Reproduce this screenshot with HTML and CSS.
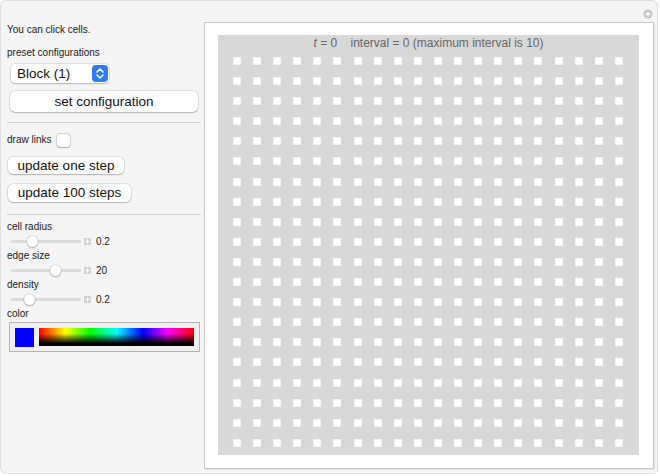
FILE: index.html
```html
<!DOCTYPE html>
<html>
<head>
<meta charset="utf-8">
<link rel="stylesheet" href="styles.css">
</head>
<body>
<div class="panel">
  <span class="corner-btn"><svg width="10" height="10" viewBox="0 0 10 10"><circle cx="5" cy="5" r="4.5" fill="#c4c4c4"/><path d="M5 2.6v4.8M2.6 5h4.8" stroke="#fff" stroke-width="1.3"/></svg></span>
  <div class="controls">
    <div class="note">You can click cells.</div>
    <div class="label l-preset">preset configurations</div>
    <div class="popup">
      <span class="popup-text">Block (1)</span>
      <span class="chev"><svg width="16" height="17" viewBox="0 0 16 17"><path d="M5 7 L8 4 L11 7 M5 10 L8 13 L11 10" fill="none" stroke="#fff" stroke-width="1.6" stroke-linecap="round" stroke-linejoin="round"/></svg></span>
    </div>
    <div class="btn btn-wide">set configuration</div>
    <div class="sep sep1"></div>
    <div class="check-row"><span class="label">draw links</span><span class="check"></span></div>
    <div class="btn btn-step">update one step</div>
    <div class="btn btn-step2">update 100 steps</div>
    <div class="sep sep2"></div>
    <div class="label l-first">cell radius</div>
    <div class="slider"><span class="track"><span class="thumb" style="left:21px"></span></span><span class="plus"></span><span class="val">0.2</span></div>
    <div class="label l-next">edge size</div>
    <div class="slider"><span class="track"><span class="thumb" style="left:44px"></span></span><span class="plus"></span><span class="val">20</span></div>
    <div class="label l-next">density</div>
    <div class="slider"><span class="track"><span class="thumb" style="left:18px"></span></span><span class="plus"></span><span class="val">0.2</span></div>
    <div class="label l-next">color</div>
    <div class="colorbox"><span class="swatch"></span><span class="hues"></span></div>
  </div>
  <div class="frame">
    <div class="plot">
      <div class="title"><i>t</i> = 0&nbsp;&nbsp;&nbsp;&nbsp;interval = 0 (maximum interval is 10)</div>
      <div class="grid">
<i></i><i></i><i></i><i></i><i></i><i></i><i></i><i></i><i></i><i></i><i></i><i></i><i></i><i></i><i></i><i></i><i></i><i></i><i></i><i></i>
<i></i><i></i><i></i><i></i><i></i><i></i><i></i><i></i><i></i><i></i><i></i><i></i><i></i><i></i><i></i><i></i><i></i><i></i><i></i><i></i>
<i></i><i></i><i></i><i></i><i></i><i></i><i></i><i></i><i></i><i></i><i></i><i></i><i></i><i></i><i></i><i></i><i></i><i></i><i></i><i></i>
<i></i><i></i><i></i><i></i><i></i><i></i><i></i><i></i><i></i><i></i><i></i><i></i><i></i><i></i><i></i><i></i><i></i><i></i><i></i><i></i>
<i></i><i></i><i></i><i></i><i></i><i></i><i></i><i></i><i></i><i></i><i></i><i></i><i></i><i></i><i></i><i></i><i></i><i></i><i></i><i></i>
<i></i><i></i><i></i><i></i><i></i><i></i><i></i><i></i><i></i><i></i><i></i><i></i><i></i><i></i><i></i><i></i><i></i><i></i><i></i><i></i>
<i></i><i></i><i></i><i></i><i></i><i></i><i></i><i></i><i></i><i></i><i></i><i></i><i></i><i></i><i></i><i></i><i></i><i></i><i></i><i></i>
<i></i><i></i><i></i><i></i><i></i><i></i><i></i><i></i><i></i><i></i><i></i><i></i><i></i><i></i><i></i><i></i><i></i><i></i><i></i><i></i>
<i></i><i></i><i></i><i></i><i></i><i></i><i></i><i></i><i></i><i></i><i></i><i></i><i></i><i></i><i></i><i></i><i></i><i></i><i></i><i></i>
<i></i><i></i><i></i><i></i><i></i><i></i><i></i><i></i><i></i><i></i><i></i><i></i><i></i><i></i><i></i><i></i><i></i><i></i><i></i><i></i>
<i></i><i></i><i></i><i></i><i></i><i></i><i></i><i></i><i></i><i></i><i></i><i></i><i></i><i></i><i></i><i></i><i></i><i></i><i></i><i></i>
<i></i><i></i><i></i><i></i><i></i><i></i><i></i><i></i><i></i><i></i><i></i><i></i><i></i><i></i><i></i><i></i><i></i><i></i><i></i><i></i>
<i></i><i></i><i></i><i></i><i></i><i></i><i></i><i></i><i></i><i></i><i></i><i></i><i></i><i></i><i></i><i></i><i></i><i></i><i></i><i></i>
<i></i><i></i><i></i><i></i><i></i><i></i><i></i><i></i><i></i><i></i><i></i><i></i><i></i><i></i><i></i><i></i><i></i><i></i><i></i><i></i>
<i></i><i></i><i></i><i></i><i></i><i></i><i></i><i></i><i></i><i></i><i></i><i></i><i></i><i></i><i></i><i></i><i></i><i></i><i></i><i></i>
<i></i><i></i><i></i><i></i><i></i><i></i><i></i><i></i><i></i><i></i><i></i><i></i><i></i><i></i><i></i><i></i><i></i><i></i><i></i><i></i>
<i></i><i></i><i></i><i></i><i></i><i></i><i></i><i></i><i></i><i></i><i></i><i></i><i></i><i></i><i></i><i></i><i></i><i></i><i></i><i></i>
<i></i><i></i><i></i><i></i><i></i><i></i><i></i><i></i><i></i><i></i><i></i><i></i><i></i><i></i><i></i><i></i><i></i><i></i><i></i><i></i>
<i></i><i></i><i></i><i></i><i></i><i></i><i></i><i></i><i></i><i></i><i></i><i></i><i></i><i></i><i></i><i></i><i></i><i></i><i></i><i></i>
<i></i><i></i><i></i><i></i><i></i><i></i><i></i><i></i><i></i><i></i><i></i><i></i><i></i><i></i><i></i><i></i><i></i><i></i><i></i><i></i>
      </div>
    </div>
  </div>
</div>
</body>
</html>
```
FILE: styles.css
```css
html, body { margin: 0; padding: 0; background: #fff; }
body { font-family: "Liberation Sans", Arial, sans-serif; color: #222; }

.panel {
  position: relative;
  box-sizing: border-box;
  width: 658px;
  height: 474px;
  background: #f5f5f5;
  border: 1px solid #dedede;
  border-radius: 6px;
  display: flex;
  align-items: flex-start;
  padding: 21px 0 0 6px;
}
.corner-btn { position: absolute; right: 4px; top: 8px; width: 10px; height: 10px; line-height: 0; }

.controls { width: 196px; display: flex; flex-direction: column; align-items: flex-start; }

.note, .label { font-size: 10px; line-height: 12px; height: 12px; white-space: nowrap; color: #222; }
.note { margin-top: 2px; }
.l-preset { margin-top: 11px; }

.popup {
  margin: 5px 0 0 4px;
  width: 98px; height: 19px;
  box-sizing: border-box;
  background: #fff;
  border-radius: 4px;
  box-shadow: 0 0 0 0.5px rgba(0,0,0,0.18), 0 1px 1.5px rgba(0,0,0,0.18);
  display: flex; align-items: center; justify-content: space-between;
  padding: 0 1px 0 6px;
}
.popup-text { font-size: 13.5px; color: #111; }
.chev { width: 16px; height: 17px; background: #2f7cf6; border-radius: 4px; line-height: 0; }

.btn {
  box-sizing: border-box;
  background: #fff;
  border-radius: 5px;
  box-shadow: 0 0 0 0.5px rgba(0,0,0,0.16), 0 1px 1.5px rgba(0,0,0,0.2);
  font-size: 13.5px;
  color: #111;
  text-align: center;
  white-space: nowrap;
}
.btn-wide { margin: 8px 0 0 3px; width: 188px; height: 21px; line-height: 21px; }
.btn-step { margin-top: 10px; margin-left: 1px; width: 116px; height: 17px; line-height: 17px; }
.btn-step2 { margin-top: 10px; margin-left: 1px; width: 123px; height: 18px; line-height: 18px; }

.sep { height: 1px; background: #d2d2d2; width: 194px; }
.sep1 { margin-top: 10px; }
.sep2 { margin-top: 12px; }

.check-row { margin-top: 10px; height: 14px; display: flex; align-items: center; }
.check {
  margin-left: 6px;
  width: 13px; height: 13px; box-sizing: border-box;
  background: #fff; border-radius: 3px;
  box-shadow: 0 0 0 0.5px rgba(0,0,0,0.25), 0 0.5px 1px rgba(0,0,0,0.2);
}

.l-first { margin-top: 6px; }
.l-next { margin-top: 3px; }

.slider { margin-top: 2px; height: 12px; display: flex; align-items: center; }
.track { position: relative; margin-left: 4px; width: 70px; height: 3px; background: #dcdcdc; border-radius: 2px; }
.thumb {
  position: absolute; top: -4px; margin-left: -5.5px;
  width: 11px; height: 11px; border-radius: 50%;
  background: #fff;
  box-shadow: 0 0 0 0.5px rgba(0,0,0,0.2), 0 1px 1.5px rgba(0,0,0,0.25);
}
.plus {
  position: relative;
  margin-left: 3px; width: 7px; height: 7px; background: #d0d0d0; border-radius: 1px;
}
.plus::before, .plus::after { content: ""; position: absolute; background: #fff; }
.plus::before { left: 3px; top: 1px; width: 1px; height: 5px; }
.plus::after { left: 1px; top: 3px; width: 5px; height: 1px; }
.val { margin-left: 5px; font-size: 10px; color: #222; }

.colorbox {
  margin: 2px 0 0 2px;
  width: 191px; height: 30px; box-sizing: border-box;
  border: 1px solid #b4b4b4;
  background: #efefef;
  display: flex; align-items: center;
  padding-left: 5px;
}
.swatch { width: 19px; height: 19px; background: #0000ff; }
.hues {
  margin-left: 5px; width: 155px; height: 18px;
  background:
    linear-gradient(to bottom, rgba(0,0,0,0) 0%, rgba(0,0,0,0) 30%, rgba(0,0,0,1) 85%, rgba(0,0,0,1) 100%),
    linear-gradient(to right, #ff0000, #ffff00 17%, #00ff00 33%, #00ffff 50%, #0000ff 67%, #ff00ff 83%, #ff0000);
}

.frame {
  margin-left: 1px;
  width: 450px; height: 447px; box-sizing: border-box;
  background: #fff;
  border: 1px solid #c6c6c6;
  box-shadow: 1px 1px 0 #e4e4e4;
  padding: 12px 0 0 13px;
}
.plot { width: 421px; height: 420px; background: #d8d8d8; }
.title {
  height: 22px; line-height: 14px; padding-top: 1px; box-sizing: border-box;
  text-align: center; font-size: 12px; color: #666; white-space: nowrap;
}
.grid {
  display: grid;
  grid-template-columns: repeat(20, 8px);
  grid-auto-rows: 8px;
  column-gap: 12.1px;
  row-gap: 12.1px;
  padding-left: 15px;
}
.grid i { display: block; background: #fff; box-shadow: inset 0 0 0 0.5px #ececec; }
```
